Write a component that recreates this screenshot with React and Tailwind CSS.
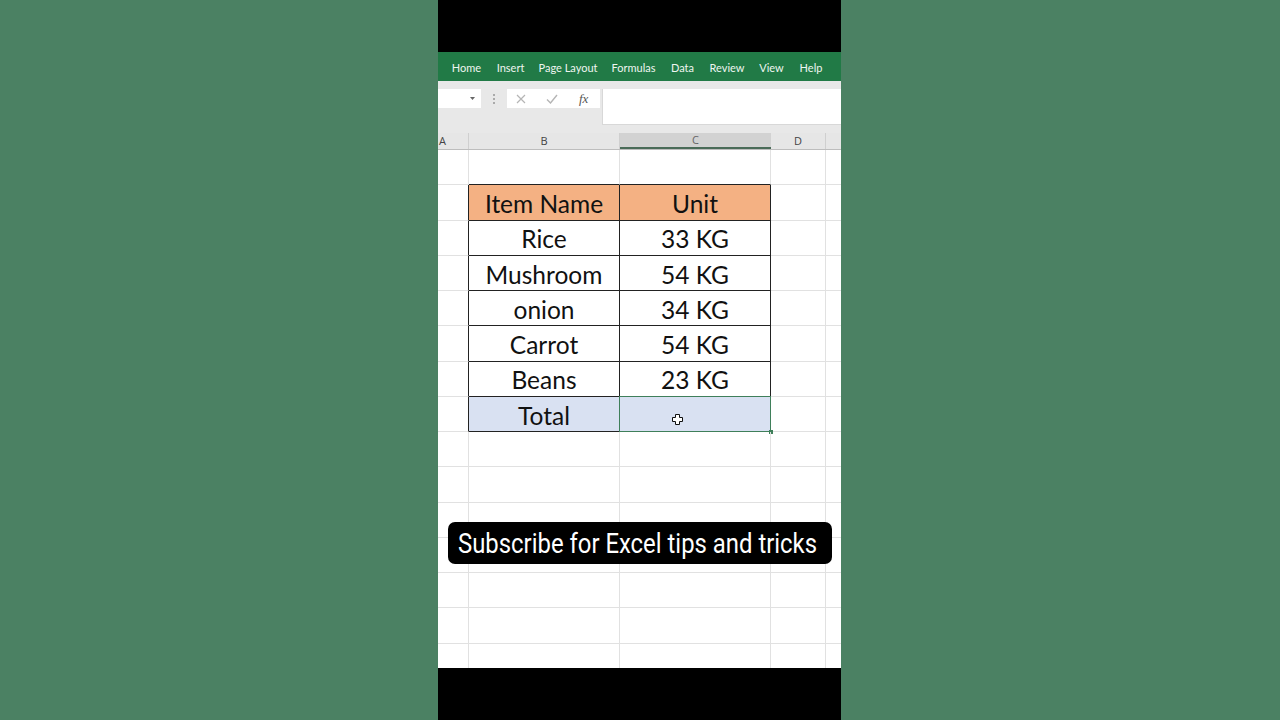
import React from "react";

const rows = [
  ["Item Name", "Unit", "head"],
  ["Rice", "33 KG"],
  ["Mushroom", "54 KG"],
  ["onion", "34 KG"],
  ["Carrot", "54 KG"],
  ["Beans", "23 KG"],
  ["Total", "", "total"],
];

const TOTAL_ROWS = 15;

const tabs = [
  ["Home", 27],
  ["Insert", 25],
  ["Page Layout", 54],
  ["Formulas", 41],
  ["Data", 21],
  ["Review", 32],
  ["View", 21],
  ["Help", 22],
];

function Cursor() {
  return (
    <svg width="11" height="11" viewBox="0 0 11 11" className="absolute left-[52px] top-[17px]">
      <path d="M3.5 0.5h4v3h3v4h-3v3h-4v-3h-3v-4h3z" fill="#fff" stroke="#111" strokeWidth="1" />
    </svg>
  );
}

function Sheet() {
  const out = [];
  for (let r = 0; r < TOTAL_ROWS; r++) {
    const t = r >= 1 && r <= 7 ? rows[r - 1] : null;
    const isAbove = r === 0;
    const kind = t ? t[2] : null;
    const bg = kind === "head" ? "bg-[#f4b183]" : kind === "total" ? "bg-[#d9e1f2]" : "bg-white";
    out.push(
      <div key={r} className="flex h-[35.25px] shrink-0">
        <div className={`w-[31px] h-full border-b border-b-[#e1e1e1] border-r ${t ? "border-r-[#222]" : "border-r-[#e1e1e1]"}`} />
        <div
          className={`w-[151px] h-full flex items-center justify-center border-r border-b ${
            t ? `${bg} border-r-[#222] border-b-[#222]` : isAbove ? "border-r-[#e1e1e1] border-b-[#222]" : "border-r-[#e1e1e1] border-b-[#e1e1e1]"
          }`}
        >
          {t && <span className="text-[24.5px] text-[#111] leading-none pt-[4px]">{t[0]}</span>}
        </div>
        <div
          className={`relative w-[151px] h-full flex items-center justify-center border-r border-b ${
            t ? `${bg} border-r-[#222] border-b-[#222]` : isAbove ? "border-r-[#e1e1e1] border-b-[#222]" : "border-r-[#e1e1e1] border-b-[#e1e1e1]"
          }`}
        >
          {t && <span className="text-[24.5px] text-[#111] leading-none pt-[4px]">{t[1]}</span>}
          {kind === "total" && (
            <>
              <div className="absolute -left-[1px] -top-[1px] -right-[1px] -bottom-[1px] border border-[#3f7f5a]" />
              <div className="absolute -right-[3px] -bottom-[3px] w-[4px] h-[4px] bg-[#3f7f5a]" />
              <Cursor />
            </>
          )}
        </div>
        <div className="w-[55px] h-full border-r border-r-[#e1e1e1] border-b border-b-[#e1e1e1]" />
        <div className="flex-1 h-full border-b border-b-[#e1e1e1]" />
      </div>
    );
  }
  return out;
}

export default function App() {
  return (
    <div className="w-[1280px] h-[720px] bg-[#4b8163] flex overflow-hidden" style={{ fontFamily: "Lato, 'Open Sans', sans-serif" }}>
      <div className="ml-[438px] w-[403px] h-full flex flex-col">
        <div className="h-[52px] bg-black shrink-0" />
        {/* ribbon tabs */}
        <div className="h-[29px] bg-[#217a46] shrink-0 flex items-center pl-[15px] pt-[3px] gap-[18px] text-[11px] text-[#eef5f0] whitespace-nowrap" style={{ fontFamily: "Lato, sans-serif" }}>
          {tabs.map(([label, w]) => (
            <span key={label} className="flex justify-center shrink-0" style={{ width: w }}>
              {label}
            </span>
          ))}
        </div>
        {/* formula bar */}
        <div className="h-[52px] bg-[#e8e8e8] shrink-0 flex items-start pt-[8px]">
          <div className="w-[43px] h-[19px] bg-white flex items-center justify-end pr-[6px]">
            <svg width="5" height="3" viewBox="0 0 5 3"><path d="M0 0h5L2.5 3z" fill="#666" /></svg>
          </div>
          <div className="w-[26px] h-[19px] flex flex-col items-center justify-center gap-[2px]">
            <div className="w-[2px] h-[2px] bg-[#aaa]" />
            <div className="w-[2px] h-[2px] bg-[#aaa]" />
            <div className="w-[2px] h-[2px] bg-[#aaa]" />
          </div>
          <div className="w-[93px] h-[19px] bg-white flex items-center">
            <svg width="10" height="10" viewBox="0 0 10 10" className="ml-[9px]"><path d="M1 1l8 8M9 1l-8 8" stroke="#b5b5b5" strokeWidth="1.2" /></svg>
            <svg width="12" height="10" viewBox="0 0 12 10" className="ml-[20px]"><path d="M1 5.5l3.5 3.5L11 1" stroke="#b5b5b5" strokeWidth="1.4" fill="none" /></svg>
            <span className="ml-[21px] text-[13px] italic text-[#555] leading-none" style={{ fontFamily: "'Liberation Serif', serif" }}>fx</span>
          </div>
          <div className="ml-[2px] flex-1 h-[36px] bg-white border-l border-b border-[#d8d8d8]" />
        </div>
        {/* column headers */}
        <div className="h-[17px] shrink-0 flex bg-[#e6e6e6] border-b border-[#bdbdbd] text-[11px] text-[#444]" style={{ fontFamily: "'Open Sans', sans-serif" }}>
          <div className="w-[31px] h-full flex items-center pl-[1px] border-r border-[#cfcfcf]">A</div>
          <div className="w-[151px] h-full flex items-center justify-center border-r border-[#cfcfcf]">B</div>
          <div className="w-[151px] h-full flex items-center justify-center bg-[#d2d2d2] border-b-2 border-[#4a6b58] text-[#666]">C</div>
          <div className="w-[55px] h-full flex items-center justify-center border-r border-[#cfcfcf]">D</div>
          <div className="flex-1 h-full" />
        </div>
        {/* sheet */}
        <div className="relative flex-1 bg-white flex flex-col overflow-hidden">
          <Sheet />
          <div className="absolute left-[10px] top-[372px] w-[384px] h-[42px] bg-black rounded-[7px] flex items-center pl-[10px] overflow-hidden">
            <span className="text-white text-[28px] leading-none whitespace-nowrap origin-left scale-x-[0.853] pt-[1px]" style={{ fontFamily: "Roboto, sans-serif" }}>
              Subscribe for Excel tips and tricks
            </span>
          </div>
        </div>
        <div className="h-[52px] bg-black shrink-0" />
      </div>
    </div>
  );
}
